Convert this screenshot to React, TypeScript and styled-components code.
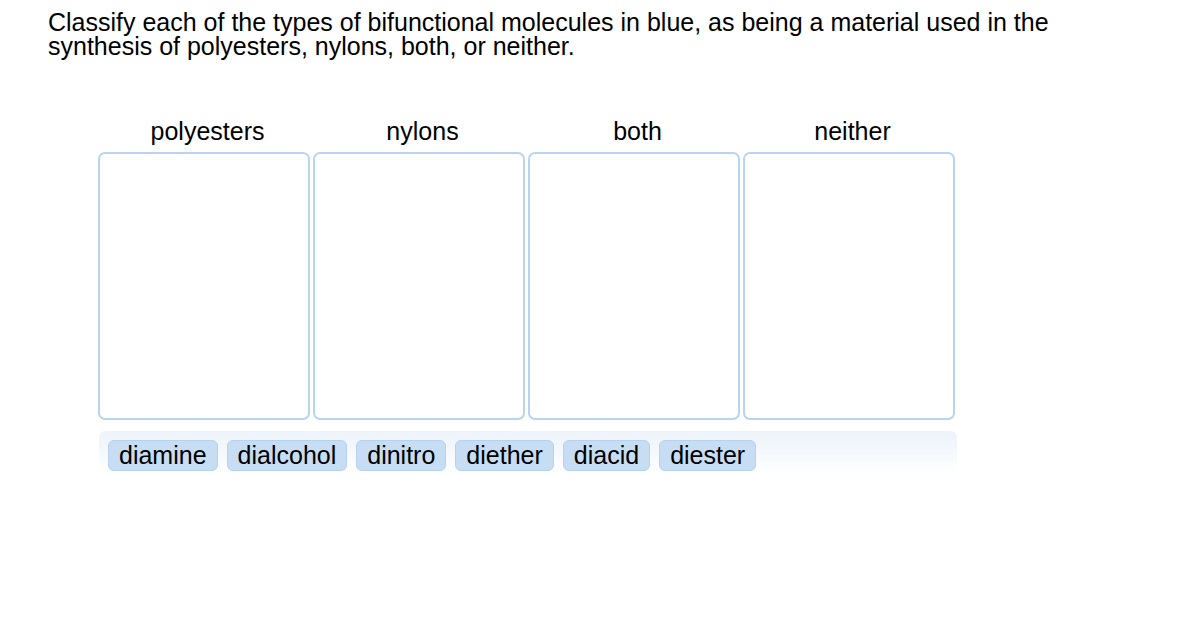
import styled, { createGlobalStyle } from 'styled-components';

const GlobalStyle = createGlobalStyle`
  html, body {
    margin: 0;
    padding: 0;
    background: #ffffff;
  }
  body {
    font-family: "Liberation Sans", Arial, sans-serif;
    color: #000;
  }
`;

const Page = styled.div`
  width: 1182px;
  height: 644px;
  box-sizing: border-box;
  padding: 10px 0 0 48px;
`;

const Prompt = styled.p`
  margin: 0;
  width: 1060px;
  font-size: 25px;
  line-height: 24px;
`;

const Board = styled.div`
  margin: 58px 0 0 50px;
  width: 860px;
`;

const Columns = styled.div`
  display: flex;
`;

const Column = styled.div`
  width: 216px;
  display: flex;
  flex-direction: column;
`;

const Label = styled.div`
  height: 30px;
  line-height: 30px;
  font-size: 25px;
  text-align: center;
  padding-left: 4px;
  margin-bottom: 6px;
`;

const DropBox = styled.div`
  width: 212px;
  height: 268px;
  box-sizing: border-box;
  border: 2px solid #b7d4f1;
  border-radius: 7px;
  background: #fff;
`;

const Tray = styled.div`
  margin: 11px 0 0 1px;
  width: 858px;
  height: 44px;
  box-sizing: border-box;
  padding: 9px 0 0 9px;
  border-radius: 6px;
  background: linear-gradient(to bottom, #edf3fa 0%, #f5f9fd 50%, #ffffff 100%);
  display: flex;
  align-items: flex-start;
  gap: 9px;
`;

const Chip = styled.div`
  height: 31px;
  box-sizing: border-box;
  padding: 0 10px;
  border: 1px solid #b5d2ef;
  border-radius: 6px;
  background: #c7ddf4;
  font-size: 25px;
  line-height: 29px;
  white-space: nowrap;
`;

const categories = ['polyesters', 'nylons', 'both', 'neither'];
const molecules = ['diamine', 'dialcohol', 'dinitro', 'diether', 'diacid', 'diester'];

export default function App() {
  return (
    <>
      <GlobalStyle />
      <Page>
        <Prompt>
          Classify each of the types of bifunctional molecules in blue, as being a material used in the
          synthesis of polyesters, nylons, both, or neither.
        </Prompt>
        <Board>
          <Columns>
            {categories.map((c) => (
              <Column key={c}>
                <Label>{c}</Label>
                <DropBox />
              </Column>
            ))}
          </Columns>
          <Tray>
            {molecules.map((m) => (
              <Chip key={m}>{m}</Chip>
            ))}
          </Tray>
        </Board>
      </Page>
    </>
  );
}
